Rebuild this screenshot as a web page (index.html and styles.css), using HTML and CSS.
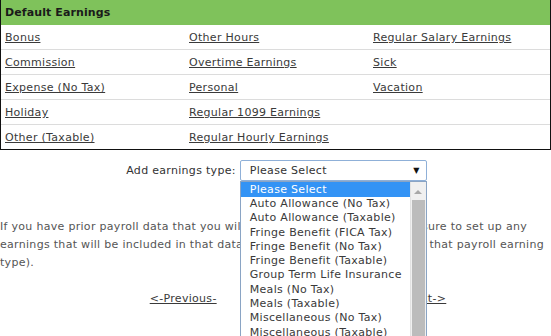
FILE: index.html
```html
<!DOCTYPE html>
<html>
<head>
<meta charset="utf-8">
<link rel="stylesheet" href="styles.css">
</head>
<body>
<div class="earnings">
  <div class="earnings-head">Default Earnings</div>
  <div class="earnings-grid">
    <div class="cell"><a href="#">Bonus</a></div>
    <div class="cell"><a href="#">Other Hours</a></div>
    <div class="cell"><a href="#">Regular Salary Earnings</a></div>
    <div class="cell"><a href="#">Commission</a></div>
    <div class="cell"><a href="#">Overtime Earnings</a></div>
    <div class="cell"><a href="#">Sick</a></div>
    <div class="cell"><a href="#">Expense (No Tax)</a></div>
    <div class="cell"><a href="#">Personal</a></div>
    <div class="cell"><a href="#">Vacation</a></div>
    <div class="cell"><a href="#">Holiday</a></div>
    <div class="cell"><a href="#">Regular 1099 Earnings</a></div>
    <div class="cell"></div>
    <div class="cell last"><a href="#">Other (Taxable)</a></div>
    <div class="cell last"><a href="#">Regular Hourly Earnings</a></div>
    <div class="cell last"></div>
  </div>
</div>

<div class="add-row">
  <span class="add-label">Add earnings type:</span>
  <div class="select-wrap">
    <div class="select-box">
      <span>Please Select</span>
      <span class="select-arrow">&#9660;</span>
    </div>
    <div class="dropdown">
      <ul class="options">
        <li class="selected">Please Select</li>
        <li>Auto Allowance (No Tax)</li>
        <li>Auto Allowance (Taxable)</li>
        <li>Fringe Benefit (FICA Tax)</li>
        <li>Fringe Benefit (No Tax)</li>
        <li>Fringe Benefit (Taxable)</li>
        <li>Group Term Life Insurance</li>
        <li>Meals (No Tax)</li>
        <li>Meals (Taxable)</li>
        <li>Miscellaneous (No Tax)</li>
        <li>Miscellaneous (Taxable)</li>
      </ul>
      <div class="scrollbar">
        <div class="scroll-up"></div>
        <div class="scroll-thumb"></div>
      </div>
    </div>
  </div>
</div>

<p class="info">If you have prior payroll data that you will be adding to your system, be sure to set up any earnings that will be included in that data (and then be certain to choose that payroll earning type).</p>

<div class="nav">
  <a href="#">&lt;-Previous-</a>
  <a href="#">Next-&gt;</a>
</div>
</body>
</html>
```

FILE: styles.css
```css
html {
  overflow: hidden;
}

body {
  margin: 0;
  padding: 0;
  min-height: 100vh;
  background: #fff;
  font-family: "DejaVu Sans", Verdana, sans-serif;
  font-size: 11px;
  letter-spacing: 0.3px;
  color: #555;
}

a {
  color: #3a3a3a;
  text-decoration: underline;
}

.earnings {
  border: 1px solid #111;
  border-top: none;
}

.earnings-head {
  height: 25px;
  line-height: 25px;
  background: #7fc25b;
  color: #1a1a1a;
  font-weight: bold;
  letter-spacing: 0.1px;
  padding-left: 4px;
}

.earnings-grid {
  display: grid;
  grid-template-columns: 184px 184px 1fr;
}

.cell {
  height: 24px;
  line-height: 25px;
  border-bottom: 1px solid #dcdcdc;
  padding-left: 4px;
}

.cell.last {
  border-bottom: none;
}

.add-row {
  display: flex;
  justify-content: center;
  align-items: center;
  gap: 4px;
  margin-top: 10px;
  padding-left: 2px;
  color: #333;
}

.select-wrap {
  position: relative;
  width: 187px;
}

.select-box {
  height: 19px;
  border: 1px solid #8fb0d8;
  border-radius: 2px;
  display: flex;
  align-items: center;
  justify-content: space-between;
  padding: 0 6px 0 9px;
  color: #333;
  background: #fff;
}

.select-arrow {
  font-size: 8px;
  color: #111;
}

.dropdown {
  position: absolute;
  left: 0;
  top: 21px;
  width: 185px;
  height: 154px;
  border: 1px solid #8aa4c4;
  border-bottom: none;
  background: #fff;
  display: flex;
  overflow: hidden;
}

.options {
  list-style: none;
  margin: 0;
  padding: 0;
  flex: 1;
  color: #3a3a3a;
}

.options li {
  height: 14.3px;
  line-height: 14.3px;
  padding-left: 9px;
  white-space: nowrap;
}

.options li.selected {
  height: 15px;
  line-height: 15px;
  background: #3393f5;
  color: #fff;
}

.scrollbar {
  width: 15px;
  background: #f0f0f0;
  border-left: 1px solid #e2e2e2;
  display: flex;
  flex-direction: column;
  align-items: center;
}

.scroll-up {
  margin-top: 8px;
  width: 0;
  height: 0;
  border-left: 4px solid transparent;
  border-right: 4px solid transparent;
  border-bottom: 4px solid #a8a8a8;
}

.scroll-thumb {
  margin-top: 6px;
  width: 13px;
  flex: 1;
  background: #bcbcbc;
}

.info {
  margin: 37px 0 0 0;
  line-height: 18px;
  color: #555;
}

.nav {
  display: flex;
  justify-content: center;
  gap: 189px;
  margin-top: 18px;
  padding-left: 45px;
  line-height: 18px;
}
```
